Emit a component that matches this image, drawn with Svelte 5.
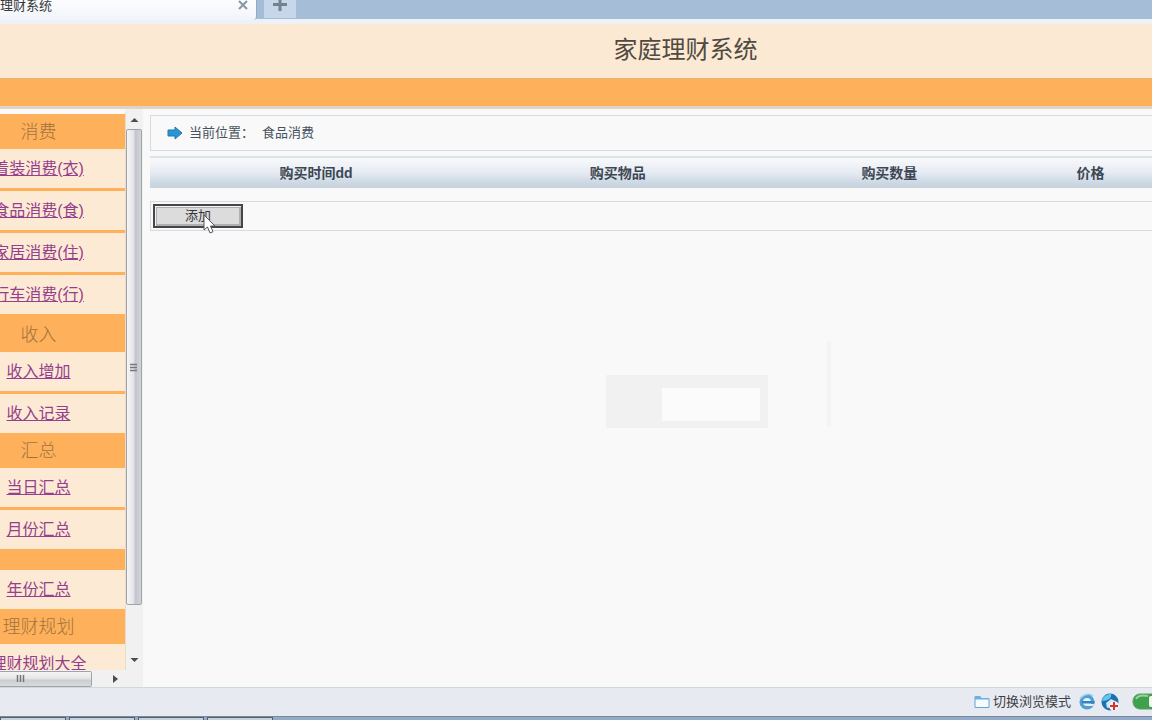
<!-- App.svelte -->
<script lang="ts">
  type Group = { title: string; links: string[]; size?: 'tall' | 'thin' };

  const groups: Group[] = [
    { title: '消费', links: ['着装消费(衣)', '食品消费(食)', '家居消费(住)', '行车消费(行)'] },
    { title: '收入', links: ['收入增加', '收入记录'], size: 'tall' },
    { title: '汇总', links: ['当日汇总', '月份汇总'] },
    { title: '', links: ['年份汇总'], size: 'thin' },
    { title: '理财规划', links: ['理财规划大全'] },
  ];

  const columns = [
    { label: '购买时间dd', width: 33 },
    { label: '购买物品', width: 27 },
    { label: '购买数量', width: 27 },
    { label: '价格', width: 13 },
  ];

  const windows = [1, 2, 3, 4];
</script>

<div class="browser">
  <div class="tab-strip">
    <div class="tab">
      <span>理财系统</span>
      <button class="tab-close" aria-label="关闭标签">
        <svg width="10" height="10" viewBox="0 0 10 10"><path d="M1 1l8 8M9 1l-8 8" stroke="#8796a6" stroke-width="2" /></svg>
      </button>
    </div>
    <button class="new-tab" aria-label="新建标签">
      <svg width="16" height="14" viewBox="0 0 16 14"><path d="M8 0v11M1 4.500h14" stroke="#74818f" stroke-width="3" /></svg>
    </button>
  </div>

  <header class="banner">
    <h1>家庭理财系统</h1>
  </header>
  <div class="banner-bar"></div>

  <div class="frames">
    <aside class="side">
      <div class="side-row">
        <nav class="menu">
          {#each groups as group}
            <h2 class:tall={group.size === 'tall'} class:thin={group.size === 'thin'}>{group.title}</h2>
            <ul>
              {#each group.links as link}
                <li><a href="#menu">{link}</a></li>
              {/each}
            </ul>
          {/each}
        </nav>
        <div class="vscroll">
          <svg class="arrow" width="17" height="20" viewBox="0 0 17 20"><path d="M4.500 13l4-4 4 4z" fill="#4d4d50" /></svg>
          <div class="vthumb">
            <svg width="8" height="9" viewBox="0 0 8 9"><path d="M0 1.500h7M0 4.500h7M0 7.500h7" stroke="#77787c" stroke-width="1.500" /></svg>
          </div>
          <svg class="arrow" width="17" height="20" viewBox="0 0 17 20"><path d="M4.500 8h8l-4 4z" fill="#4d4d50" /></svg>
        </div>
      </div>
      <div class="hscroll">
        <div class="hthumb">
          <svg width="10" height="8" viewBox="0 0 10 8"><path d="M1.500 0v7M4.500 0v7M7.500 0v7" stroke="#77787c" stroke-width="1.500" /></svg>
        </div>
        <svg class="harrow" width="8" height="10" viewBox="0 0 8 10"><path d="M1 1l5 4-5 4z" fill="#4d4d50" /></svg>
      </div>
    </aside>

    <main>
      <div class="crumb">
        <svg width="16" height="14" viewBox="0 0 16 14"><path d="M1 4h7V1l7 6-7 6v-3H1z" fill="#2b94d4" stroke="#1f78b4" /></svg>
        <span>当前位置：</span>
        <span class="place">食品消费</span>
      </div>

      <table>
        <thead>
          <tr>
            {#each columns as column}
              <th style="width: {column.width}%">{column.label}</th>
            {/each}
          </tr>
        </thead>
      </table>

      <div class="action-row">
        <button class="add">
          添加
          <svg class="pointer" width="14" height="20" viewBox="0 0 14 20">
            <path d="M1 1v15l3.500-3 2.500 6 3-1.300-2.500-5.700H12z" fill="#fff" stroke="#55565a" />
          </svg>
        </button>
      </div>

      <div class="faded-panel"><div></div></div>
      <div class="faded-line"></div>
    </main>
  </div>

  <footer class="status">
    <button class="mode">
      <svg width="16" height="14" viewBox="0 0 16 14">
        <path d="M1 12.500v-11h5l1.500 2H15v9z" fill="#f6fbff" stroke="#69a3d2" />
        <path d="M1 1h5l1.500 2H15v1.500H1z" fill="#6db0e2" />
      </svg>
      切换浏览模式
    </button>
    <svg width="18" height="18" viewBox="0 0 18 18">
      <circle cx="9" cy="9" r="7.500" fill="#4f9fd4" />
      <circle cx="9" cy="9" r="4" fill="#e5f2fa" />
      <path d="M4 8h12.500v2.500H4z" fill="#3682be" />
      <path d="M10 11h6l-1 2h-5z" fill="#e5f2fa" />
      <path d="M2 6c3-5 10-6 13-3" fill="none" stroke="#9bd0ee" stroke-width="1.500" />
    </svg>
    <svg width="20" height="18" viewBox="0 0 20 18">
      <circle cx="9" cy="9" r="8.500" fill="#1c70b3" />
      <path d="M1 8c1-5 5-7 9-7 1 4-3 7-9 7z" fill="#62c7ed" />
      <path d="M5 10l5-4 4 2-3 6-5 1z" fill="#c9e7f3" />
      <circle cx="13" cy="13" r="5" fill="#f8eeee" />
      <path d="M13 9v8M9 13h8" stroke="#d13434" stroke-width="2" />
    </svg>
    <svg class="toggle" width="34" height="18" viewBox="0 0 34 18">
      <rect x="1" y="1" width="32" height="15" rx="7" fill="#3fa14b" stroke="#5c9c62" />
      <path d="M4 6c2-4 7-4 12-3" fill="none" stroke="#93d697" stroke-width="2" />
      <rect x="17" y="3" width="14" height="11" rx="2" fill="#f3f6f3" />
    </svg>
  </footer>
  <div class="taskbar">
    {#each windows as win}
      <span></span>
    {/each}
  </div>
</div>

<style>
:global(body) {
  margin: 0;
}

.browser {
  display: flex;
  flex-direction: column;
  height: 100vh;
  overflow: hidden;
  background: #f9f9f9;
  color: #45525e;
  font-family: "Liberation Sans", "Noto Sans CJK SC", sans-serif;
  font-size: 13px;
}

button {
  margin: 0;
  padding: 0;
  border: none;
  background: none;
  color: inherit;
  font: inherit;
}

svg {
  display: block;
  flex: none;
}

/* tab strip */
.tab-strip {
  display: flex;
  flex: none;
  height: 19px;
  background: #a6bdd7;
  border-bottom: 5px solid #eef1f7;
}

.tab {
  display: flex;
  justify-content: space-between;
  box-sizing: border-box;
  width: 257px;
  height: 20px;
  padding-right: 8px;
  background: linear-gradient(#fdfdfe, #f1f4fa);
  border-right: 1px solid #8eabc8;
  border-bottom-right-radius: 4px;
  line-height: 12px;
  color: #35393d;
}

.tab-close {
  height: 10px;
}

.new-tab {
  display: flex;
  justify-content: center;
  align-items: flex-start;
  width: 32px;
  height: 18px;
  margin-left: 7px;
  background: #c6d7e9;
}

/* banner */
.banner {
  flex: none;
  height: 54px;
  padding-left: 19%;
  background: #fbe9d3;
  text-align: center;
}

h1 {
  margin: 0;
  font-size: 24px;
  line-height: 52px;
  font-weight: 400;
  color: #514a42;
}

.banner-bar {
  flex: none;
  height: 27px;
  background: #ffb05a;
  border-top: 1px solid #e9b676;
  border-bottom: 3px solid #dfd5c7;
}

/* frames */
.frames {
  display: flex;
  flex: 1;
  min-height: 0;
}

.side {
  display: flex;
  flex-direction: column;
  width: 143px;
  background: #f1f1f2;
}

.side-row {
  display: flex;
  flex: 1;
  min-height: 0;
}

.menu {
  flex: 1;
  min-width: 0;
  overflow: hidden;
  border-top: 5px solid #fafafa;
  border-right: 1px solid #e8dccb;
  background: #ffb05a;
}

h2,
li {
  display: flex;
  align-items: center;
  justify-content: center;
  box-sizing: border-box;
  padding: 0 48px 4px 0;
  white-space: nowrap;
}

h2 {
  height: 35px;
  margin: 0;
  font-size: 18px;
  font-weight: 300;
  color: #a0743f;
}

h2.tall {
  height: 38px;
  padding-bottom: 0;
}

h2.thin {
  height: 21px;
}

ul {
  display: flex;
  flex-direction: column;
  gap: 3px;
  margin: 0;
  padding: 0;
  list-style: none;
}

li {
  height: 39px;
  background: #fcead4;
  font-size: 16px;
}

li a {
  color: #963f8d;
  text-underline-offset: 1px;
}

.vscroll {
  display: flex;
  flex-direction: column;
  width: 17px;
}

.vthumb {
  display: flex;
  flex: 1;
  align-items: center;
  justify-content: center;
  margin: 0 1px 45px 0;
  border: 1px solid #a2a3a8;
  border-radius: 2px;
  background: linear-gradient(to right, #f5f5f6, #e6e6ea 45%, #c3c6ce 60%, #d2d4db);
}

.hscroll {
  display: flex;
  align-items: center;
  height: 17px;
}

.hthumb {
  display: flex;
  align-items: center;
  box-sizing: border-box;
  width: 92px;
  height: 16px;
  padding-left: 16px;
  border: 1px solid #a2a3a8;
  border-left: none;
  border-radius: 0 2px 2px 0;
  background: linear-gradient(#f5f5f6, #e6e6e8 45%, #ceced2 60%, #dadadd);
}

.harrow {
  margin-left: 20px;
}

/* content */
main {
  position: relative;
  flex: 1;
  min-width: 0;
  margin-left: 7px;
  padding-top: 6px;
}

.crumb {
  display: flex;
  align-items: center;
  height: 34px;
  padding-left: 16px;
  border: 1px solid #d3dbe0;
  border-right: none;
  line-height: 20px;
}

.crumb span {
  margin-left: 6px;
}

.crumb .place {
  margin-left: 8px;
}

table {
  width: calc(100% + 4px);
  height: 32px;
  margin-top: 5px;
  border-collapse: collapse;
  table-layout: fixed;
  border-top: 2px solid #dde2e4;
  border-bottom: 1px solid #c5d1dc;
  background: linear-gradient(#fafafc, #e6ebf3 50%, #cbd7e2 85%, #c9d4df);
}

th {
  padding: 0;
  font-size: 14px;
  line-height: 20px;
  color: #3d4752;
}

.action-row {
  height: 24px;
  margin-top: 13px;
  padding: 2px;
  border: 1px solid #d3dbe0;
  border-right: none;
}

.add {
  position: relative;
  width: 90px;
  height: 24px;
  border: 2px solid #45464a;
  background: #dcdcdc;
  box-shadow: inset 1px 1px #f4f4f4, inset 0 0 0 2px #b0b0b0;
  line-height: 18px;
  color: #333639;
}

.pointer {
  position: absolute;
  left: 48px;
  top: 8px;
}

.faded-panel {
  position: absolute;
  left: 456px;
  top: 266px;
  padding: 13px 8px 7px 56px;
  background: #f1f1f1;
}

.faded-panel div {
  width: 98px;
  height: 33px;
  background: #fbfbfb;
}

.faded-line {
  position: absolute;
  left: 677px;
  top: 232px;
  width: 4px;
  height: 86px;
  background: #f4f4f4;
}

/* bottom bars */
.status {
  display: flex;
  flex: none;
  align-items: center;
  justify-content: flex-end;
  gap: 5px;
  height: 28px;
  border-top: 1px solid #ccd9df;
  background: #e8eaf1;
}

.mode {
  display: flex;
  align-items: center;
  gap: 3px;
  margin-right: 2px;
  line-height: 18px;
  color: #3c4045;
}

.toggle {
  margin: 0 -14px 0 6px;
}

.taskbar {
  display: flex;
  flex: none;
  gap: 3px;
  height: 3px;
  border-top: 1px solid #77889f;
  background: #93abc8;
}

.taskbar span {
  box-sizing: border-box;
  width: 66px;
  border: 1px solid #56606b;
  border-bottom: none;
  background: #c5d0da;
}
</style>
